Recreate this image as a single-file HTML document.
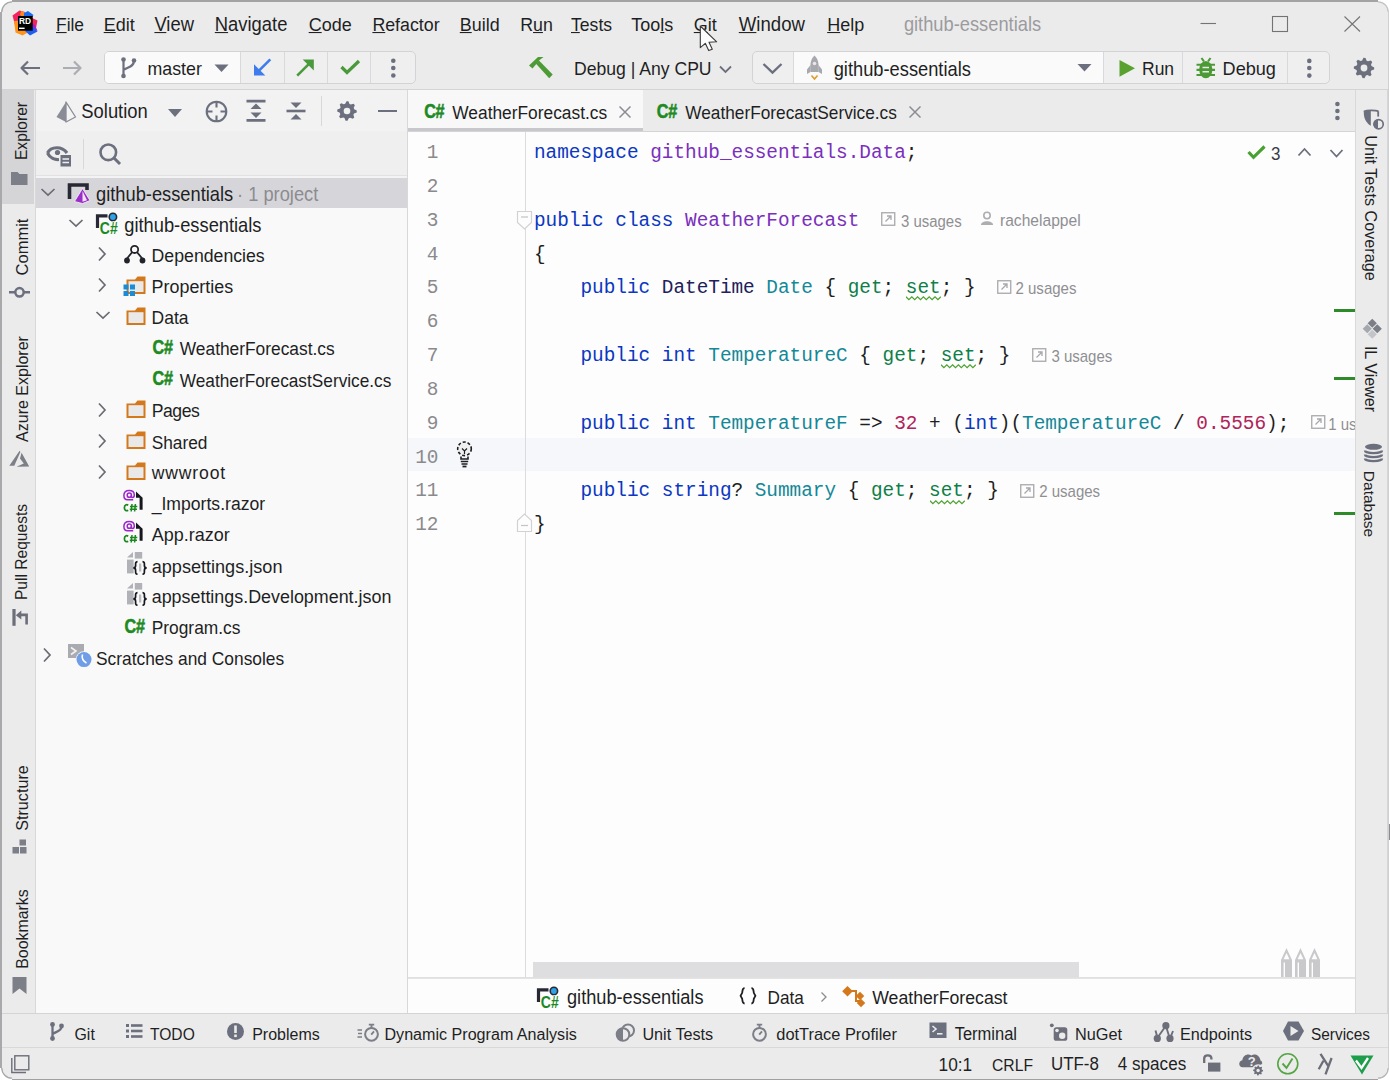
<!DOCTYPE html>
<html><head><meta charset="utf-8">
<style>
*{box-sizing:border-box;margin:0;padding:0}
html,body{width:1390px;height:1080px;overflow:hidden;background:#fff}
body{font-family:"Liberation Sans",sans-serif;position:relative}
.a{position:absolute;display:block}
.t{position:absolute;white-space:pre;z-index:2}
u{text-decoration:underline;text-underline-offset:1px;text-decoration-thickness:1px}
</style></head><body>
<div class="a" style="left:0px;top:0px;width:1390px;height:90px;background:#ebebeb;"></div>
<div class="a" style="left:0px;top:89px;width:1390px;height:1px;background:#d4d4d4;"></div>
<div class="a" style="left:0px;top:90px;width:36px;height:923px;background:#ebebeb;"></div>
<div class="a" style="left:35px;top:90px;width:1px;height:923px;background:#d9d9d9;"></div>
<div class="a" style="left:2px;top:90px;width:32px;height:114px;background:#d5d5d8;"></div>
<div class="a" style="left:36px;top:90px;width:372px;height:923px;background:#f9f9f9;"></div>
<div class="a" style="left:36px;top:90px;width:372px;height:41px;background:#f2f2f2;"></div>
<div class="a" style="left:36px;top:131px;width:372px;height:46px;background:#efefef;"></div>
<div class="a" style="left:36px;top:175px;width:372px;height:1px;background:#e2e2e2;"></div>
<div class="a" style="left:36px;top:176px;width:372px;height:2px;background:#f3f3f3;"></div>
<div class="a" style="left:36px;top:178px;width:372px;height:30px;background:#d6d6da;"></div>
<div class="a" style="left:407px;top:90px;width:1px;height:923px;background:#d8d8d8;"></div>
<div class="a" style="left:408px;top:90px;width:947px;height:41px;background:#ebebeb;"></div>
<div class="a" style="left:408px;top:131px;width:947px;height:1px;background:#d4d4d4;"></div>
<div class="a" style="left:408px;top:90px;width:235px;height:38px;background:#f8f8f8;"></div>
<div class="a" style="left:408px;top:128px;width:235px;height:3px;background:#c8c8cc;"></div>
<div class="a" style="left:408px;top:132px;width:947px;height:846px;background:#fdfdfd;"></div>
<div class="a" style="left:408px;top:438px;width:947px;height:33px;background:#f5f7fa;"></div>
<div class="a" style="left:524.5px;top:132px;width:1px;height:846px;background:#dcdcdc;"></div>
<div class="a" style="left:533px;top:962px;width:546px;height:16px;background:#dedee0;"></div>
<div class="a" style="left:408px;top:978px;width:947px;height:1px;background:#e4e4e4;"></div>
<div class="a" style="left:408px;top:979px;width:947px;height:34px;background:#fdfdfd;"></div>
<div class="a" style="left:1355px;top:90px;width:35px;height:923px;background:#ebebeb;"></div>
<div class="a" style="left:1355px;top:90px;width:1px;height:923px;background:#d9d9d9;"></div>
<div class="a" style="left:0px;top:1013px;width:1390px;height:1px;background:#d4d4d4;"></div>
<div class="a" style="left:0px;top:1014px;width:1390px;height:33px;background:#ebebeb;"></div>
<div class="a" style="left:0px;top:1047px;width:1390px;height:1px;background:#d9d9d9;"></div>
<div class="a" style="left:0px;top:1048px;width:1390px;height:32px;background:#ebebeb;"></div>
<div class="t" style="left:56px;top:13.87px;font-size:17.4px;line-height:23px;color:#1e1f24;font-family:'Liberation Sans',sans-serif;transform:scaleY(1.06);transform-origin:0 17.53px;"><u>F</u>ile</div>
<div class="t" style="left:103.7px;top:13.66px;font-size:18px;line-height:23px;color:#1e1f24;font-family:'Liberation Sans',sans-serif;transform:scaleY(1.06);transform-origin:0 17.74px;"><u>E</u>dit</div>
<div class="t" style="left:154.4px;top:13.02px;font-size:18.4px;line-height:24px;color:#1e1f24;font-family:'Liberation Sans',sans-serif;transform:scaleY(1.06);transform-origin:0 18.38px;"><u>V</u>iew</div>
<div class="t" style="left:214.8px;top:13.02px;font-size:18.4px;line-height:24px;color:#1e1f24;font-family:'Liberation Sans',sans-serif;transform:scaleY(1.06);transform-origin:0 18.38px;"><u>N</u>avigate</div>
<div class="t" style="left:308.7px;top:13.66px;font-size:18px;line-height:23px;color:#1e1f24;font-family:'Liberation Sans',sans-serif;transform:scaleY(1.06);transform-origin:0 17.74px;"><u>C</u>ode</div>
<div class="t" style="left:372.4px;top:13.73px;font-size:17.8px;line-height:23px;color:#1e1f24;font-family:'Liberation Sans',sans-serif;transform:scaleY(1.06);transform-origin:0 17.67px;"><u>R</u>efactor</div>
<div class="t" style="left:459.8px;top:13.70px;font-size:17.9px;line-height:23px;color:#1e1f24;font-family:'Liberation Sans',sans-serif;transform:scaleY(1.06);transform-origin:0 17.70px;"><u>B</u>uild</div>
<div class="t" style="left:520.2px;top:13.73px;font-size:17.8px;line-height:23px;color:#1e1f24;font-family:'Liberation Sans',sans-serif;transform:scaleY(1.06);transform-origin:0 17.67px;">R<u>u</u>n</div>
<div class="t" style="left:571px;top:13.80px;font-size:17.6px;line-height:23px;color:#1e1f24;font-family:'Liberation Sans',sans-serif;transform:scaleY(1.06);transform-origin:0 17.60px;"><u>T</u>ests</div>
<div class="t" style="left:631.3px;top:13.66px;font-size:18px;line-height:23px;color:#1e1f24;font-family:'Liberation Sans',sans-serif;transform:scaleY(1.06);transform-origin:0 17.74px;">Too<u>l</u>s</div>
<div class="t" style="left:693.8px;top:13.66px;font-size:18px;line-height:23px;color:#1e1f24;font-family:'Liberation Sans',sans-serif;transform:scaleY(1.06);transform-origin:0 17.74px;"><u>G</u>it</div>
<div class="t" style="left:738.8px;top:12.96px;font-size:18.6px;line-height:24px;color:#1e1f24;font-family:'Liberation Sans',sans-serif;transform:scaleY(1.06);transform-origin:0 18.44px;"><u>W</u>indow</div>
<div class="t" style="left:827.2px;top:13.66px;font-size:18px;line-height:23px;color:#1e1f24;font-family:'Liberation Sans',sans-serif;transform:scaleY(1.06);transform-origin:0 17.74px;"><u>H</u>elp</div>
<div class="t" style="left:903.9px;top:13.06px;font-size:18.3px;line-height:24px;color:#9b9b9f;font-family:'Liberation Sans',sans-serif;transform:scaleY(1.06);transform-origin:0 18.34px;">github-essentials</div>
<div class="t" style="left:147.5px;top:57.73px;font-size:17.8px;line-height:23px;color:#1e1f24;font-family:'Liberation Sans',sans-serif;transform:scaleY(1.06);transform-origin:0 17.67px;">master</div>
<div class="t" style="left:574px;top:58.30px;font-size:17.6px;line-height:23px;color:#1e1f24;font-family:'Liberation Sans',sans-serif;transform:scaleY(1.06);transform-origin:0 17.60px;">Debug | Any CPU</div>
<div class="t" style="left:833.7px;top:57.56px;font-size:18.3px;line-height:24px;color:#1e1f24;font-family:'Liberation Sans',sans-serif;transform:scaleY(1.06);transform-origin:0 18.34px;">github-essentials</div>
<div class="t" style="left:1142px;top:57.84px;font-size:17.5px;line-height:23px;color:#1e1f24;font-family:'Liberation Sans',sans-serif;transform:scaleY(1.06);transform-origin:0 17.56px;">Run</div>
<div class="t" style="left:1222.6px;top:57.13px;font-size:18.1px;line-height:24px;color:#1e1f24;font-family:'Liberation Sans',sans-serif;transform:scaleY(1.06);transform-origin:0 18.27px;">Debug</div>
<div class="t" style="left:81.3px;top:100.12px;font-size:18.4px;line-height:24px;color:#1e1f24;font-family:'Liberation Sans',sans-serif;transform:scaleY(1.06);transform-origin:0 18.38px;">Solution</div>
<div class="t" style="left:96px;top:182.56px;font-size:18.3px;line-height:24px;color:#1e1f24;font-family:'Liberation Sans',sans-serif;transform:scaleY(1.06);transform-origin:0 18.34px;">github-essentials</div>
<div class="t" style="left:124.3px;top:213.56px;font-size:18.3px;line-height:24px;color:#1e1f24;font-family:'Liberation Sans',sans-serif;transform:scaleY(1.06);transform-origin:0 18.34px;">github-essentials</div>
<div class="t" style="left:151.6px;top:245.27px;font-size:17.7px;line-height:23px;color:#1e1f24;font-family:'Liberation Sans',sans-serif;transform:scaleY(1.06);transform-origin:0 17.63px;">Dependencies</div>
<div class="t" style="left:151.6px;top:276.20px;font-size:17.9px;line-height:23px;color:#1e1f24;font-family:'Liberation Sans',sans-serif;transform:scaleY(1.06);transform-origin:0 17.70px;">Properties</div>
<div class="t" style="left:151.6px;top:307.34px;font-size:17.5px;line-height:23px;color:#1e1f24;font-family:'Liberation Sans',sans-serif;transform:scaleY(1.06);transform-origin:0 17.56px;">Data</div>
<div class="t" style="left:179.8px;top:338.39px;font-size:17.35px;line-height:23px;color:#1e1f24;font-family:'Liberation Sans',sans-serif;transform:scaleY(1.06);transform-origin:0 17.51px;">WeatherForecast.cs</div>
<div class="t" style="left:179.8px;top:369.92px;font-size:17.25px;line-height:22px;color:#1e1f24;font-family:'Liberation Sans',sans-serif;transform:scaleY(1.06);transform-origin:0 16.98px;">WeatherForecastService.cs</div>
<div class="t" style="left:151.7px;top:400.30px;font-size:17.6px;line-height:23px;color:#1e1f24;font-family:'Liberation Sans',sans-serif;transform:scaleY(1.06);transform-origin:0 17.60px;letter-spacing:-0.45px;">Pages</div>
<div class="t" style="left:151.7px;top:431.91px;font-size:17.3px;line-height:22px;color:#1e1f24;font-family:'Liberation Sans',sans-serif;transform:scaleY(1.06);transform-origin:0 16.99px;">Shared</div>
<div class="t" style="left:151.7px;top:462.30px;font-size:17.6px;line-height:23px;color:#1e1f24;font-family:'Liberation Sans',sans-serif;transform:scaleY(1.06);transform-origin:0 17.60px;letter-spacing:0.85px;">wwwroot</div>
<div class="t" style="left:151.7px;top:493.30px;font-size:17.6px;line-height:23px;color:#1e1f24;font-family:'Liberation Sans',sans-serif;transform:scaleY(1.06);transform-origin:0 17.60px;">_Imports.razor</div>
<div class="t" style="left:151.7px;top:524.16px;font-size:18px;line-height:23px;color:#1e1f24;font-family:'Liberation Sans',sans-serif;transform:scaleY(1.06);transform-origin:0 17.74px;">App.razor</div>
<div class="t" style="left:151.7px;top:554.63px;font-size:18.1px;line-height:24px;color:#1e1f24;font-family:'Liberation Sans',sans-serif;transform:scaleY(1.06);transform-origin:0 18.27px;">appsettings.json</div>
<div class="t" style="left:151.7px;top:586.20px;font-size:17.9px;line-height:23px;color:#1e1f24;font-family:'Liberation Sans',sans-serif;transform:scaleY(1.06);transform-origin:0 17.70px;">appsettings.Development.json</div>
<div class="t" style="left:151.7px;top:617.38px;font-size:17.37px;line-height:23px;color:#1e1f24;font-family:'Liberation Sans',sans-serif;transform:scaleY(1.06);transform-origin:0 17.52px;">Program.cs</div>
<div class="t" style="left:96px;top:648.38px;font-size:17.36px;line-height:23px;color:#1e1f24;font-family:'Liberation Sans',sans-serif;transform:scaleY(1.06);transform-origin:0 17.52px;">Scratches and Consoles</div>
<div class="t" style="left:237px;top:182.56px;font-size:18.3px;line-height:24px;color:#8c8c90;font-family:'Liberation Sans',sans-serif;transform:scaleY(1.06);transform-origin:0 18.34px;">· 1 project</div>
<div class="t" style="left:452.3px;top:101.79px;font-size:17.35px;line-height:23px;color:#1e1f24;font-family:'Liberation Sans',sans-serif;transform:scaleY(1.06);transform-origin:0 17.51px;">WeatherForecast.cs</div>
<div class="t" style="left:685.3px;top:102.32px;font-size:17.25px;line-height:22px;color:#1e1f24;font-family:'Liberation Sans',sans-serif;transform:scaleY(1.06);transform-origin:0 16.98px;">WeatherForecastService.cs</div>
<div class="t" style="left:426.87px;top:141.14px;font-size:19.38px;line-height:25px;color:#8a8a8e;font-family:'Liberation Mono',monospace;transform:scaleY(1.06);transform-origin:0 17.66px;">1</div>
<div class="t" style="left:426.87px;top:174.97px;font-size:19.38px;line-height:25px;color:#8a8a8e;font-family:'Liberation Mono',monospace;transform:scaleY(1.06);transform-origin:0 17.66px;">2</div>
<div class="t" style="left:426.87px;top:208.80px;font-size:19.38px;line-height:25px;color:#8a8a8e;font-family:'Liberation Mono',monospace;transform:scaleY(1.06);transform-origin:0 17.66px;">3</div>
<div class="t" style="left:426.87px;top:242.63px;font-size:19.38px;line-height:25px;color:#8a8a8e;font-family:'Liberation Mono',monospace;transform:scaleY(1.06);transform-origin:0 17.66px;">4</div>
<div class="t" style="left:426.87px;top:276.46px;font-size:19.38px;line-height:25px;color:#8a8a8e;font-family:'Liberation Mono',monospace;transform:scaleY(1.06);transform-origin:0 17.66px;">5</div>
<div class="t" style="left:426.87px;top:310.29px;font-size:19.38px;line-height:25px;color:#8a8a8e;font-family:'Liberation Mono',monospace;transform:scaleY(1.06);transform-origin:0 17.66px;">6</div>
<div class="t" style="left:426.87px;top:344.12px;font-size:19.38px;line-height:25px;color:#8a8a8e;font-family:'Liberation Mono',monospace;transform:scaleY(1.06);transform-origin:0 17.66px;">7</div>
<div class="t" style="left:426.87px;top:377.95px;font-size:19.38px;line-height:25px;color:#8a8a8e;font-family:'Liberation Mono',monospace;transform:scaleY(1.06);transform-origin:0 17.66px;">8</div>
<div class="t" style="left:426.87px;top:411.78px;font-size:19.38px;line-height:25px;color:#8a8a8e;font-family:'Liberation Mono',monospace;transform:scaleY(1.06);transform-origin:0 17.66px;">9</div>
<div class="t" style="left:415.24px;top:445.61px;font-size:19.38px;line-height:25px;color:#8a8a8e;font-family:'Liberation Mono',monospace;transform:scaleY(1.06);transform-origin:0 17.66px;">10</div>
<div class="t" style="left:415.24px;top:479.44px;font-size:19.38px;line-height:25px;color:#8a8a8e;font-family:'Liberation Mono',monospace;transform:scaleY(1.06);transform-origin:0 17.66px;">11</div>
<div class="t" style="left:415.24px;top:513.27px;font-size:19.38px;line-height:25px;color:#8a8a8e;font-family:'Liberation Mono',monospace;transform:scaleY(1.06);transform-origin:0 17.66px;">12</div>
<div class="t" style="left:534px;top:141.14px;font-size:19.38px;line-height:25px;color:#1e1f24;font-family:'Liberation Mono',monospace;transform:scaleY(1.06);transform-origin:0 17.66px;letter-spacing:0px"><span style="color:#0b37c2">namespace </span><span style="color:#7a2fbd">github_essentials.Data</span><span style="color:#1e1f24">;</span></div>
<div class="t" style="left:534px;top:208.80px;font-size:19.38px;line-height:25px;color:#1e1f24;font-family:'Liberation Mono',monospace;transform:scaleY(1.06);transform-origin:0 17.66px;letter-spacing:0px"><span style="color:#0b37c2">public class </span><span style="color:#7a2fbd">WeatherForecast</span></div>
<div class="t" style="left:534px;top:242.63px;font-size:19.38px;line-height:25px;color:#1e1f24;font-family:'Liberation Mono',monospace;transform:scaleY(1.06);transform-origin:0 17.66px;letter-spacing:0px"><span style="color:#1e1f24">{</span></div>
<div class="t" style="left:534px;top:276.46px;font-size:19.38px;line-height:25px;color:#1e1f24;font-family:'Liberation Mono',monospace;transform:scaleY(1.06);transform-origin:0 17.66px;letter-spacing:0px"><span style="color:#0b37c2">    public </span><span style="color:#21205c">DateTime </span><span style="color:#138898">Date</span><span style="color:#1e1f24"> { </span><span style="color:#0e7f48">get</span><span style="color:#1e1f24">; </span><span style="color:#0e7f48">set</span><span style="color:#1e1f24">; }</span></div>
<div class="t" style="left:534px;top:344.12px;font-size:19.38px;line-height:25px;color:#1e1f24;font-family:'Liberation Mono',monospace;transform:scaleY(1.06);transform-origin:0 17.66px;letter-spacing:0px"><span style="color:#0b37c2">    public int </span><span style="color:#138898">TemperatureC</span><span style="color:#1e1f24"> { </span><span style="color:#0e7f48">get</span><span style="color:#1e1f24">; </span><span style="color:#0e7f48">set</span><span style="color:#1e1f24">; }</span></div>
<div class="t" style="left:534px;top:411.78px;font-size:19.38px;line-height:25px;color:#1e1f24;font-family:'Liberation Mono',monospace;transform:scaleY(1.06);transform-origin:0 17.66px;letter-spacing:0px"><span style="color:#0b37c2">    public int </span><span style="color:#138898">TemperatureF</span><span style="color:#1e1f24"> => </span><span style="color:#b0245a">32</span><span style="color:#1e1f24"> + (</span><span style="color:#0b37c2">int</span><span style="color:#1e1f24">)(</span><span style="color:#138898">TemperatureC</span><span style="color:#1e1f24"> / </span><span style="color:#b0245a">0.5556</span><span style="color:#1e1f24">);</span></div>
<div class="t" style="left:534px;top:479.44px;font-size:19.38px;line-height:25px;color:#1e1f24;font-family:'Liberation Mono',monospace;transform:scaleY(1.06);transform-origin:0 17.66px;letter-spacing:0px"><span style="color:#0b37c2">    public string</span><span style="color:#1e1f24">? </span><span style="color:#138898">Summary</span><span style="color:#1e1f24"> { </span><span style="color:#0e7f48">get</span><span style="color:#1e1f24">; </span><span style="color:#0e7f48">set</span><span style="color:#1e1f24">; }</span></div>
<div class="t" style="left:534px;top:513.27px;font-size:19.38px;line-height:25px;color:#1e1f24;font-family:'Liberation Mono',monospace;transform:scaleY(1.06);transform-origin:0 17.66px;letter-spacing:0px"><span style="color:#1e1f24">}</span></div>
<svg class="a" style="left:881px;top:212px;" width="15" height="14" viewBox="0 0 15 14"><rect x="0.75" y="0.75" width="13" height="12.5" fill="none" stroke="#a8a8ac" stroke-width="1.3"/><path d="M4.5 9.5 L10 4 M6 4 H10 V8" fill="none" stroke="#a8a8ac" stroke-width="1.3"/></svg>
<div class="t" style="left:901px;top:211.82px;font-size:14.95px;line-height:19px;color:#8f8f93;font-family:'Liberation Sans',sans-serif;transform:scaleY(1.06);transform-origin:0 14.68px;">3 usages</div>
<div class="t" style="left:1000px;top:211.09px;font-size:15.6px;line-height:20px;color:#8f8f93;font-family:'Liberation Sans',sans-serif;transform:scaleY(1.06);transform-origin:0 15.41px;">rachelappel</div>
<div class="t" style="left:567px;top:985.99px;font-size:18.2px;line-height:24px;color:#1e1f24;font-family:'Liberation Sans',sans-serif;transform:scaleY(1.06);transform-origin:0 18.31px;">github-essentials</div>
<div class="t" style="left:767.5px;top:987.34px;font-size:17.2px;line-height:22px;color:#1e1f24;font-family:'Liberation Sans',sans-serif;transform:scaleY(1.06);transform-origin:0 16.96px;">Data</div>
<div class="t" style="left:872.2px;top:986.67px;font-size:17.7px;line-height:23px;color:#1e1f24;font-family:'Liberation Sans',sans-serif;transform:scaleY(1.06);transform-origin:0 17.63px;">WeatherForecast</div>
<div class="t" style="left:74.5px;top:1024.09px;font-size:15.9px;line-height:21px;color:#1e1f24;font-family:'Liberation Sans',sans-serif;transform:scaleY(1.06);transform-origin:0 16.01px;">Git</div>
<div class="t" style="left:150px;top:1024.69px;font-size:15.6px;line-height:20px;color:#1e1f24;font-family:'Liberation Sans',sans-serif;transform:scaleY(1.06);transform-origin:0 15.41px;">TODO</div>
<div class="t" style="left:252.2px;top:1024.06px;font-size:16px;line-height:21px;color:#1e1f24;font-family:'Liberation Sans',sans-serif;transform:scaleY(1.06);transform-origin:0 16.04px;">Problems</div>
<div class="t" style="left:384.5px;top:1024.02px;font-size:16.1px;line-height:21px;color:#1e1f24;font-family:'Liberation Sans',sans-serif;transform:scaleY(1.06);transform-origin:0 16.08px;">Dynamic Program Analysis</div>
<div class="t" style="left:642.4px;top:1023.99px;font-size:16.2px;line-height:21px;color:#1e1f24;font-family:'Liberation Sans',sans-serif;transform:scaleY(1.06);transform-origin:0 16.11px;">Unit Tests</div>
<div class="t" style="left:776.3px;top:1023.92px;font-size:16.4px;line-height:21px;color:#1e1f24;font-family:'Liberation Sans',sans-serif;transform:scaleY(1.06);transform-origin:0 16.18px;">dotTrace Profiler</div>
<div class="t" style="left:954.7px;top:1023.88px;font-size:16.5px;line-height:21px;color:#1e1f24;font-family:'Liberation Sans',sans-serif;transform:scaleY(1.06);transform-origin:0 16.22px;">Terminal</div>
<div class="t" style="left:1075px;top:1023.95px;font-size:16.3px;line-height:21px;color:#1e1f24;font-family:'Liberation Sans',sans-serif;transform:scaleY(1.06);transform-origin:0 16.15px;">NuGet</div>
<div class="t" style="left:1180px;top:1023.99px;font-size:16.2px;line-height:21px;color:#1e1f24;font-family:'Liberation Sans',sans-serif;transform:scaleY(1.06);transform-origin:0 16.11px;">Endpoints</div>
<div class="t" style="left:1311px;top:1024.76px;font-size:15.4px;line-height:20px;color:#1e1f24;font-family:'Liberation Sans',sans-serif;transform:scaleY(1.06);transform-origin:0 15.34px;">Services</div>
<div class="t" style="left:938.6px;top:1054.31px;font-size:17.3px;line-height:22px;color:#1e1f24;font-family:'Liberation Sans',sans-serif;transform:scaleY(1.06);transform-origin:0 16.99px;">10:1</div>
<div class="t" style="left:992px;top:1055.86px;font-size:15.7px;line-height:20px;color:#1e1f24;font-family:'Liberation Sans',sans-serif;transform:scaleY(1.06);transform-origin:0 15.44px;">CRLF</div>
<div class="t" style="left:1051px;top:1054.44px;font-size:16.9px;line-height:22px;color:#1e1f24;font-family:'Liberation Sans',sans-serif;transform:scaleY(1.06);transform-origin:0 16.86px;">UTF-8</div>
<div class="t" style="left:1117.8px;top:1054.37px;font-size:17.1px;line-height:22px;color:#1e1f24;font-family:'Liberation Sans',sans-serif;transform:scaleY(1.06);transform-origin:0 16.93px;">4 spaces</div>
<svg class="a" style="left:8px;top:6px;" width="36" height="36" viewBox="0 0 36 36">
<polygon points="4.5,9.5 11.5,4.5 17,6 16,17 7,19" fill="#f0245f"/>
<polygon points="13,5 17,6.5 16,12 12,9" fill="#ff8a1f"/>
<polygon points="6,15 16,14 19,27 14.5,29.5 7.5,26.5" fill="#ff9419"/>
<polygon points="16,7 20,5 25.5,9 22,15 16,14" fill="#1c6cf0"/>
<polygon points="22,11 29.5,14.5 28,22 23,19" fill="#f0245f"/>
<polygon points="23,17 27,19 29.5,25 26,24" fill="#a21fd0"/>
<polygon points="17,25 24,20 29.5,25.5 22,29.5" fill="#1d5ef5"/>
<rect x="10" y="10" width="14.7" height="14.7" fill="#000"/>
<text x="11" y="17.6" font-family="Liberation Sans" font-weight="bold" font-size="8.4" fill="#fff">RD</text>
<rect x="11" y="21.6" width="5.6" height="1.4" fill="#fff"/>
</svg>
<svg class="a" style="left:1195px;top:10px;" width="175" height="28" viewBox="0 0 175 28">
<line x1="5.5" y1="13.5" x2="21" y2="13.5" stroke="#747474" stroke-width="1.1"/>
<rect x="77.5" y="6.5" width="15" height="15" fill="none" stroke="#747474" stroke-width="1.1"/>
<path d="M149.5 6.5 L165 21.5 M165 6.5 L149.5 21.5" stroke="#747474" stroke-width="1.1"/>
</svg>
<svg class="a" style="left:18px;top:58px;" width="70" height="20" viewBox="0 0 70 20">
<path d="M4 10 H22 M10 3.5 L3.5 10 L10 16.5" fill="none" stroke="#6c707e" stroke-width="2.2" stroke-linejoin="round"/>
<path d="M45 10 H62 M56 3.5 L62.5 10 L56 16.5" fill="none" stroke="#acadb3" stroke-width="2.2" stroke-linejoin="round"/>
</svg>
<div class="a" style="left:104px;top:51px;width:312px;height:33px;border:1px solid #d3d3d5;border-radius:5px;background:#efefef;overflow:hidden"><div class="a" style="left:0;top:0;width:135px;height:32px;background:#fafafa"></div><div class="a" style="left:135px;top:0;width:1px;height:32px;background:#d9d9db"></div><div class="a" style="left:179px;top:0;width:1px;height:32px;background:#d9d9db"></div><div class="a" style="left:222px;top:0;width:1px;height:32px;background:#d9d9db"></div><div class="a" style="left:265px;top:0;width:1px;height:32px;background:#d9d9db"></div></div>
<svg class="a" style="left:114px;top:54px;" width="130" height="28" viewBox="0 0 130 28">
<circle cx="9.5" cy="22" r="2.3" fill="#6c707e"/><circle cx="9.5" cy="5.5" r="2.3" fill="#6c707e"/><circle cx="20" cy="6.5" r="2.3" fill="#6c707e"/>
<path d="M9.5 6 V22 M20 7 C20 13 13 13 9.5 16" fill="none" stroke="#6c707e" stroke-width="2.2"/>
<polygon points="100.5,10.5 114.5,10.5 107.5,18" fill="#6c707e"/>
</svg>
<svg class="a" style="left:250px;top:56px;" width="170" height="24" viewBox="0 0 170 24">
<path d="M20.3 3.3 L9 14.6" fill="none" stroke="#3e7ced" stroke-width="2.6"/>
<polygon points="4,8.3 4,19.6 15.3,19.6" fill="#3e7ced"/>
<path d="M47.2 19.6 L58.5 8.3" fill="none" stroke="#4a9a3c" stroke-width="2.6"/>
<polygon points="52.7,3.5 63.8,3.5 63.8,14.6" fill="#4a9a3c"/>
<path d="M91.5 11 L97 16.5 L109 5" fill="none" stroke="#4a9a3c" stroke-width="3.2"/>
<circle cx="143.3" cy="4.8" r="2.3" fill="#6c707e"/><circle cx="143.3" cy="12" r="2.3" fill="#6c707e"/><circle cx="143.3" cy="19.5" r="2.3" fill="#6c707e"/>
</svg>
<svg class="a" style="left:524px;top:50px;" width="36" height="36" viewBox="0 0 36 36">
<polygon points="5,15.5 14,7 19.5,7 15.3,10.3 12.3,14 8.5,18.6" fill="#4c9b35"/>
<polygon points="11.8,13.6 15,10.6 28.7,24.6 25.2,28.2" fill="#4c9b35"/>
</svg>
<svg class="a" style="left:717px;top:62px;" width="18" height="14" viewBox="0 0 18 14"><path d="M3 4.5 L8.5 10 L14 4.5" fill="none" stroke="#6c707e" stroke-width="1.8"/></svg>
<div class="a" style="left:752px;top:51px;width:578px;height:33px;border:1px solid #d3d3d5;border-radius:5px;background:#efefef;overflow:hidden"><div class="a" style="left:41px;top:0;width:310px;height:32px;background:#fafafa"></div><div class="a" style="left:40px;top:0;width:1px;height:32px;background:#d9d9db"></div><div class="a" style="left:350px;top:0;width:1px;height:32px;background:#d9d9db"></div><div class="a" style="left:429px;top:0;width:1px;height:32px;background:#d9d9db"></div><div class="a" style="left:534px;top:0;width:1px;height:32px;background:#d9d9db"></div></div>
<svg class="a" style="left:760px;top:60px;" width="26" height="16" viewBox="0 0 26 16"><path d="M3.5 4 L12.5 12.5 L21.5 4" fill="none" stroke="#6c707e" stroke-width="2.4"/></svg>
<svg class="a" style="left:804px;top:54px;" width="22" height="28" viewBox="0 0 22 28">
<path d="M10.5 1.5 C14.5 5 15 10 14.5 18 H6.5 C6 10 6.5 5 10.5 1.5 Z" fill="#a8a9ae"/>
<path d="M6.5 11 L3 15.5 V20 L6.5 18 Z M14.5 11 L18 15.5 V20 L14.5 18 Z" fill="#a8a9ae"/>
<circle cx="10.5" cy="9.5" r="1.8" fill="#e8e8ea"/>
<path d="M7.5 21.5 L10.5 25 L13.5 21.5" fill="none" stroke="#e39a2a" stroke-width="1.6"/>
</svg>
<svg class="a" style="left:1074px;top:60px;" width="22" height="14" viewBox="0 0 22 14"><polygon points="3.5,4 17.5,4 10.5,11.5" fill="#6c707e"/></svg>
<svg class="a" style="left:1115px;top:56px;" width="24" height="24" viewBox="0 0 24 24"><polygon points="4.5,4 20,12.3 4.5,20.8" fill="#59a22f"/></svg>
<svg class="a" style="left:1193px;top:55px;" width="26" height="26" viewBox="0 0 26 26">
<path d="M3.5 9.7 H22 M3.5 14.9 H22 M3.5 20 H22 M8.5 3 L11 6.5 M17.5 3 L15 6.5" stroke="#4c9a36" stroke-width="2.1"/>
<ellipse cx="12.8" cy="14.6" rx="6.6" ry="8.6" fill="#4c9a36"/>
<path d="M9.5 12.5 H16 M9.5 16.8 H16" stroke="#e9e9e9" stroke-width="1.6"/>
</svg>
<svg class="a" style="left:1304px;top:56px;" width="12" height="24" viewBox="0 0 12 24"><circle cx="5.3" cy="4.9" r="2.3" fill="#6c707e"/><circle cx="5.3" cy="12" r="2.3" fill="#6c707e"/><circle cx="5.3" cy="19.6" r="2.3" fill="#6c707e"/></svg>
<svg class="a" style="left:1350px;top:54px;" width="28" height="28" viewBox="0 0 28 28"><polygon points="24.19,13.50 24.09,15.50 21.30,16.61 20.65,17.99 21.56,20.85 20.08,22.19 17.31,21.01 15.88,21.52 14.50,24.19 12.50,24.09 11.39,21.30 10.01,20.65 7.15,21.56 5.81,20.08 6.99,17.31 6.48,15.88 3.81,14.50 3.91,12.50 6.70,11.39 7.35,10.01 6.44,7.15 7.92,5.81 10.69,6.99 12.12,6.48 13.50,3.81 15.50,3.91 16.61,6.70 17.99,7.35 20.85,6.44 22.19,7.92 21.01,10.69 21.52,12.12" fill="#6c707e"/><circle cx="14" cy="14" r="3.4" fill="#ebebeb"/></svg>
<svg class="a" style="left:54px;top:100px;" width="24" height="24" viewBox="0 0 24 24">
<polygon points="12,2 2.5,17 12,22" fill="#8b8d96"/>
<polygon points="12,2 21.5,17 12,22" fill="#f4f4f4" stroke="#8b8d96" stroke-width="1.3" stroke-linejoin="round"/>
</svg>
<svg class="a" style="left:165px;top:105px;" width="20" height="14" viewBox="0 0 20 14"><polygon points="3,4 17,4 10,12" fill="#6c707e"/></svg>
<svg class="a" style="left:204px;top:99px;" width="26" height="26" viewBox="0 0 26 26">
<circle cx="12.5" cy="12.5" r="9.8" fill="none" stroke="#6c707e" stroke-width="2.1"/>
<path d="M12.5 2.7 V8.5 M12.5 16.5 V22.3 M2.7 12.5 H8.5 M16.5 12.5 H22.3" stroke="#6c707e" stroke-width="2.1"/>
</svg>
<svg class="a" style="left:244px;top:98px;" width="26" height="26" viewBox="0 0 26 26">
<path d="M2.5 3.2 H21.5 M2.5 22.3 H21.5" stroke="#6c707e" stroke-width="2.8"/>
<polygon points="6.5,11 12,5.5 17.5,11" fill="#6c707e"/><polygon points="6.5,14.5 12,20 17.5,14.5" fill="#6c707e"/>
</svg>
<svg class="a" style="left:284px;top:98px;" width="26" height="26" viewBox="0 0 26 26">
<path d="M2.5 13 H21.5" stroke="#6c707e" stroke-width="2.6"/>
<polygon points="6.5,4.5 12,10 17.5,4.5" fill="#6c707e"/><polygon points="6.5,21.5 12,16 17.5,21.5" fill="#6c707e"/>
</svg>
<div class="a" style="left:321px;top:96px;width:1px;height:30px;background:#d8d8d8;"></div>
<svg class="a" style="left:333px;top:97px;" width="28" height="28" viewBox="0 0 28 28"><polygon points="23.79,13.52 23.69,15.44 21.01,16.51 20.39,17.83 21.26,20.58 19.84,21.87 17.18,20.73 15.81,21.22 14.48,23.79 12.56,23.69 11.49,21.01 10.17,20.39 7.42,21.26 6.13,19.84 7.27,17.18 6.78,15.81 4.21,14.48 4.31,12.56 6.99,11.49 7.61,10.17 6.74,7.42 8.16,6.13 10.82,7.27 12.19,6.78 13.52,4.21 15.44,4.31 16.51,6.99 17.83,7.61 20.58,6.74 21.87,8.16 20.73,10.82 21.22,12.19" fill="#6c707e"/><circle cx="14" cy="14" r="3.3" fill="#f2f2f2"/></svg>
<div class="a" style="left:378px;top:110px;width:19px;height:2.2px;background:#6c707e;"></div>
<svg class="a" style="left:44px;top:140px;" width="32" height="30" viewBox="0 0 32 30">
<path d="M3.5 13 C7 6 18 6 23 13" fill="none" stroke="#6c707e" stroke-width="3.2"/>
<path d="M3.5 13 C6 18 11 20 15 19.5" fill="none" stroke="#6c707e" stroke-width="3.2"/>
<circle cx="13.5" cy="12.5" r="2.6" fill="#6c707e"/>
<rect x="16" y="14.5" width="11.5" height="12.5" fill="#6c707e" stroke="#efefef" stroke-width="1"/>
<path d="M18.5 19 H25 M18.5 22.5 H25" stroke="#efefef" stroke-width="1.4"/>
</svg>
<div class="a" style="left:83px;top:139px;width:1px;height:30px;background:#d8d8d8;"></div>
<svg class="a" style="left:96px;top:140px;" width="28" height="28" viewBox="0 0 28 28">
<circle cx="12.3" cy="12.3" r="7.8" fill="none" stroke="#6c707e" stroke-width="2.6"/>
<path d="M18 18 L24 24" stroke="#6c707e" stroke-width="3"/>
</svg>
<svg class="a" style="left:38.5px;top:185.5px;" width="18" height="12" viewBox="0 0 18 12"><path d="M2.5 3 L9 9 L15.5 3" fill="none" stroke="#6a6b73" stroke-width="1.7"/></svg>
<svg class="a" style="left:66.5px;top:216.5px;" width="18" height="12" viewBox="0 0 18 12"><path d="M2.5 3 L9 9 L15.5 3" fill="none" stroke="#6a6b73" stroke-width="1.7"/></svg>
<svg class="a" style="left:96px;top:244.7px;" width="12" height="18" viewBox="0 0 12 18"><path d="M3 2.5 L9 9 L3 15.5" fill="none" stroke="#6a6b73" stroke-width="1.7"/></svg>
<svg class="a" style="left:96px;top:276px;" width="12" height="18" viewBox="0 0 12 18"><path d="M3 2.5 L9 9 L3 15.5" fill="none" stroke="#6a6b73" stroke-width="1.7"/></svg>
<svg class="a" style="left:93.7px;top:308.8px;" width="18" height="12" viewBox="0 0 18 12"><path d="M2.5 3 L9 9 L15.5 3" fill="none" stroke="#6a6b73" stroke-width="1.7"/></svg>
<svg class="a" style="left:96px;top:400.5px;" width="12" height="18" viewBox="0 0 12 18"><path d="M3 2.5 L9 9 L3 15.5" fill="none" stroke="#6a6b73" stroke-width="1.7"/></svg>
<svg class="a" style="left:96px;top:431.5px;" width="12" height="18" viewBox="0 0 12 18"><path d="M3 2.5 L9 9 L3 15.5" fill="none" stroke="#6a6b73" stroke-width="1.7"/></svg>
<svg class="a" style="left:96px;top:462.5px;" width="12" height="18" viewBox="0 0 12 18"><path d="M3 2.5 L9 9 L3 15.5" fill="none" stroke="#6a6b73" stroke-width="1.7"/></svg>
<svg class="a" style="left:40.5px;top:645.5px;" width="12" height="18" viewBox="0 0 12 18"><path d="M3 2.5 L9 9 L3 15.5" fill="none" stroke="#6a6b73" stroke-width="1.7"/></svg>
<svg class="a" style="left:66px;top:181px;" width="26" height="24" viewBox="0 0 26 24">
<path d="M3.5 18 V4 H21 V9" fill="none" stroke="#272833" stroke-width="3.6"/>
<polygon points="16.5,7.5 8.5,20.5 16.5,22.5 24,19.5" fill="#9b2dc9" stroke="#f4f4f4" stroke-width="0.8"/>
<polygon points="16.5,10 16.5,20.8 21,19.2" fill="#f0e6f5"/>
</svg>
<svg class="a" style="left:94px;top:211px;" width="26" height="24" viewBox="0 0 26 24">
<path d="M3.5 17 V4.8 H13.5" fill="none" stroke="#272833" stroke-width="3.2"/>
<circle cx="18.9" cy="6" r="3.7" fill="#2ea2e6" stroke="#272833" stroke-width="1.6"/>
<g transform="translate(5.8 22.7) scale(1 1.13)"><text x="0" y="0" font-family="Liberation Sans" font-weight="bold" font-size="14" fill="#1b8a24" stroke="#f9f9f9" stroke-width="1" paint-order="stroke">C#</text></g>
</svg>
<svg class="a" style="left:122px;top:242px;" width="26" height="22" viewBox="0 0 26 22">
<circle cx="12.6" cy="7.4" r="3.6" fill="none" stroke="#22232b" stroke-width="1.8"/>
<path d="M10.3 10 L5 16.5 M14.9 10 L20.2 16.5" stroke="#22232b" stroke-width="1.8"/>
<circle cx="5" cy="18.5" r="2.9" fill="#22232b"/><circle cx="20.5" cy="18.5" r="2.9" fill="#22232b"/>
</svg>
<svg class="a" style="left:124.5px;top:274.5px;" width="22" height="20" viewBox="0 0 22 20">
<path d="M1.5 4.5 H10 L12.5 1.5 H20.5 V19 H1.5 Z" fill="#d4781c"/>
<rect x="3.5" y="6.2" width="15" height="10.8" fill="#e9e9e9"/>
</svg>
<svg class="a" style="left:122px;top:283px;" width="16" height="15" viewBox="0 0 16 15"><rect x="1.5" y="1.5" width="5" height="5" fill="#1a8bd6"/><rect x="8" y="1.5" width="5" height="5" fill="#1a8bd6"/><rect x="1.5" y="8" width="5" height="5" fill="#1a8bd6"/><rect x="8" y="8" width="5" height="5" fill="#1a8bd6"/></svg>
<svg class="a" style="left:124.5px;top:305.5px;" width="22" height="20" viewBox="0 0 22 20">
<path d="M1.5 4.5 H10 L12.5 1.5 H20.5 V19 H1.5 Z" fill="#d4781c"/>
<rect x="3.5" y="6.2" width="15" height="10.8" fill="#e9e9e9"/>
</svg>
<svg class="a" style="left:124.5px;top:398.5px;" width="22" height="20" viewBox="0 0 22 20">
<path d="M1.5 4.5 H10 L12.5 1.5 H20.5 V19 H1.5 Z" fill="#d4781c"/>
<rect x="3.5" y="6.2" width="15" height="10.8" fill="#e9e9e9"/>
</svg>
<svg class="a" style="left:124.5px;top:429.5px;" width="22" height="20" viewBox="0 0 22 20">
<path d="M1.5 4.5 H10 L12.5 1.5 H20.5 V19 H1.5 Z" fill="#d4781c"/>
<rect x="3.5" y="6.2" width="15" height="10.8" fill="#e9e9e9"/>
</svg>
<svg class="a" style="left:124.5px;top:460.5px;" width="22" height="20" viewBox="0 0 22 20">
<path d="M1.5 4.5 H10 L12.5 1.5 H20.5 V19 H1.5 Z" fill="#d4781c"/>
<rect x="3.5" y="6.2" width="15" height="10.8" fill="#e9e9e9"/>
</svg>
<div class="t" style="left:152.5px;top:338.3px;font-size:16.2px;line-height:21.1px;font-weight:bold;color:#1d8a23;transform:scale(1,1.26);transform-origin:0 17.0px;letter-spacing:-0.3px;-webkit-text-stroke:0.45px #1d8a23">C#</div>
<div class="t" style="left:152.5px;top:369.3px;font-size:16.2px;line-height:21.1px;font-weight:bold;color:#1d8a23;transform:scale(1,1.26);transform-origin:0 17.0px;letter-spacing:-0.3px;-webkit-text-stroke:0.45px #1d8a23">C#</div>
<div class="t" style="left:124.5px;top:616.8px;font-size:16.2px;line-height:21.1px;font-weight:bold;color:#1d8a23;transform:scale(1,1.26);transform-origin:0 17.0px;letter-spacing:-0.3px;-webkit-text-stroke:0.45px #1d8a23">C#</div>
<svg class="a" style="left:120px;top:486px;" width="30" height="30" viewBox="0 0 30 30">
<path d="M13.2 13.8 H7.5 C5 13.8 3.9 12 3.9 9.6 C3.9 6.6 6 4.5 9.2 4.5 C12.4 4.5 14.3 6.4 14.3 9 C14.3 10.5 13.8 11.5 12.5 11.5 C11.3 11.5 11.4 10.4 11.4 9.3" fill="none" stroke="#9b27c8" stroke-width="1.5"/>
<circle cx="9.3" cy="9.2" r="2.1" fill="none" stroke="#9b27c8" stroke-width="1.5"/>
<path d="M16 5.5 L22.6 11.8 V23.7 H19.6 V11.8 H16 Z" fill="#16161e"/>
<path d="M8.2 19.2 C6.6 18.2 4.4 18.8 4.4 21.7 C4.4 24.6 6.6 25.2 8.2 24.2" fill="none" stroke="#1a871f" stroke-width="1.7"/>
<path d="M12 18 L11.2 25.5 M15.4 18 L14.6 25.5 M10 20.4 H17.3 M9.8 23.2 H17" stroke="#1a871f" stroke-width="1.5"/>
</svg>
<svg class="a" style="left:120px;top:517px;" width="30" height="30" viewBox="0 0 30 30">
<path d="M13.2 13.8 H7.5 C5 13.8 3.9 12 3.9 9.6 C3.9 6.6 6 4.5 9.2 4.5 C12.4 4.5 14.3 6.4 14.3 9 C14.3 10.5 13.8 11.5 12.5 11.5 C11.3 11.5 11.4 10.4 11.4 9.3" fill="none" stroke="#9b27c8" stroke-width="1.5"/>
<circle cx="9.3" cy="9.2" r="2.1" fill="none" stroke="#9b27c8" stroke-width="1.5"/>
<path d="M16 5.5 L22.6 11.8 V23.7 H19.6 V11.8 H16 Z" fill="#16161e"/>
<path d="M8.2 19.2 C6.6 18.2 4.4 18.8 4.4 21.7 C4.4 24.6 6.6 25.2 8.2 24.2" fill="none" stroke="#1a871f" stroke-width="1.7"/>
<path d="M12 18 L11.2 25.5 M15.4 18 L14.6 25.5 M10 20.4 H17.3 M9.8 23.2 H17" stroke="#1a871f" stroke-width="1.5"/>
</svg>
<svg class="a" style="left:122px;top:549px;" width="30" height="30" viewBox="0 0 30 30">
<polygon points="5,8.6 11,3 11,8.6" fill="#b1b2b7"/>
<rect x="12.8" y="3" width="7.4" height="6.6" fill="#b1b2b7"/>
<rect x="5" y="10.6" width="6.6" height="13.8" fill="#b1b2b7"/>
<rect x="17" y="14.5" width="2.3" height="8" fill="#b9babe"/>
<path d="M15.5 12.6 C13.3 12.6 13.6 14.5 13.6 16.5 C13.6 18.3 12.8 18.9 11.3 18.9 C12.8 18.9 13.6 19.5 13.6 21.3 C13.6 23.3 13.3 25.2 15.5 25.2" fill="none" stroke="#16161e" stroke-width="1.7"/>
<path d="M20.5 12.6 C22.7 12.6 22.4 14.5 22.4 16.5 C22.4 18.3 23.2 18.9 24.7 18.9 C23.2 18.9 22.4 19.5 22.4 21.3 C22.4 23.3 22.7 25.2 20.5 25.2" fill="none" stroke="#16161e" stroke-width="1.7"/>
</svg>
<svg class="a" style="left:122px;top:580px;" width="30" height="30" viewBox="0 0 30 30">
<polygon points="5,8.6 11,3 11,8.6" fill="#b1b2b7"/>
<rect x="12.8" y="3" width="7.4" height="6.6" fill="#b1b2b7"/>
<rect x="5" y="10.6" width="6.6" height="13.8" fill="#b1b2b7"/>
<rect x="17" y="14.5" width="2.3" height="8" fill="#b9babe"/>
<path d="M15.5 12.6 C13.3 12.6 13.6 14.5 13.6 16.5 C13.6 18.3 12.8 18.9 11.3 18.9 C12.8 18.9 13.6 19.5 13.6 21.3 C13.6 23.3 13.3 25.2 15.5 25.2" fill="none" stroke="#16161e" stroke-width="1.7"/>
<path d="M20.5 12.6 C22.7 12.6 22.4 14.5 22.4 16.5 C22.4 18.3 23.2 18.9 24.7 18.9 C23.2 18.9 22.4 19.5 22.4 21.3 C22.4 23.3 22.7 25.2 20.5 25.2" fill="none" stroke="#16161e" stroke-width="1.7"/>
</svg>
<svg class="a" style="left:66px;top:642px;" width="30" height="28" viewBox="0 0 30 28">
<rect x="2" y="2" width="16" height="14" fill="#a9abb1"/>
<path d="M5 5.5 L10 9 L5 12.5" fill="none" stroke="#f2f2f2" stroke-width="1.6"/>
<circle cx="18" cy="17.6" r="8.3" fill="#f9f9f9"/>
<circle cx="18" cy="17.6" r="7.5" fill="#6f9de6"/>
<path d="M16.5 12.5 C15.5 16 17 19 20.5 21" fill="none" stroke="#fff" stroke-width="1.6"/>
</svg>
<div class="t" style="left:424.2px;top:102.2px;font-size:16.2px;line-height:21.1px;font-weight:bold;color:#1d8a23;transform:scale(1,1.26);transform-origin:0 17.0px;letter-spacing:-0.3px;-webkit-text-stroke:0.45px #1d8a23">C#</div>
<div class="t" style="left:656.8px;top:102.2px;font-size:16.2px;line-height:21.1px;font-weight:bold;color:#1d8a23;transform:scale(1,1.26);transform-origin:0 17.0px;letter-spacing:-0.3px;-webkit-text-stroke:0.45px #1d8a23">C#</div>
<svg class="a" style="left:617.5px;top:104.5px;" width="14" height="14" viewBox="0 0 14 14"><path d="M1.5 1.5 L12.5 12.5 M12.5 1.5 L1.5 12.5" stroke="#8c8d93" stroke-width="1.5"/></svg>
<svg class="a" style="left:907.7px;top:104.5px;" width="14" height="14" viewBox="0 0 14 14"><path d="M1.5 1.5 L12.5 12.5 M12.5 1.5 L1.5 12.5" stroke="#8c8d93" stroke-width="1.5"/></svg>
<svg class="a" style="left:1332px;top:98px;" width="12" height="26" viewBox="0 0 12 26"><circle cx="5.4" cy="6" r="2.3" fill="#6c707e"/><circle cx="5.4" cy="13" r="2.3" fill="#6c707e"/><circle cx="5.4" cy="20" r="2.3" fill="#6c707e"/></svg>
<svg class="a" style="left:516px;top:210px;" width="17" height="21" viewBox="0 0 17 21"><path d="M1.5 1.5 H15.5 V12.5 L8.5 19 L1.5 12.5 Z" fill="#fdfdfd" stroke="#d2d2d4" stroke-width="1.2"/><path d="M5 7 H12" stroke="#c4c4c6" stroke-width="1.2"/></svg>
<svg class="a" style="left:516px;top:512px;" width="17" height="21" viewBox="0 0 17 21"><path d="M1.5 19.5 H15.5 V8.5 L8.5 2 L1.5 8.5 Z" fill="#fdfdfd" stroke="#d2d2d4" stroke-width="1.2"/><path d="M5 13.5 H12" stroke="#c4c4c6" stroke-width="1.2"/></svg>
<svg class="a" style="left:454px;top:440px;" width="22" height="30" viewBox="0 0 22 30">
<circle cx="10.5" cy="8.8" r="6.8" fill="#f0f0f0" stroke="#1e1f24" stroke-width="1.6" stroke-dasharray="3 2"/>
<path d="M8 8.5 L10.5 11 L13 8.5 M10.5 11 V14" fill="none" stroke="#1e1f24" stroke-width="1.2"/>
<path d="M7 16.5 V19 H14 V16.5" fill="none" stroke="#1e1f24" stroke-width="1.6"/>
<path d="M6.8 21.5 H14.2 M7.5 24 H13.5" stroke="#1e1f24" stroke-width="1.6"/>
<path d="M8.5 26.5 H12.5" stroke="#1e1f24" stroke-width="1.8"/>
</svg>
<svg class="a" style="left:1246px;top:144px;" width="22" height="17" viewBox="0 0 22 17"><path d="M2.5 8 L7.5 13.3 L18.5 2.5" fill="none" stroke="#49a132" stroke-width="3.2"/></svg>
<div class="t" style="left:1271px;top:144.01px;font-size:17px;line-height:22px;color:#3a3b44;font-family:'Liberation Sans',sans-serif;transform:scaleY(1.06);transform-origin:0 16.89px;">3</div>
<svg class="a" style="left:1296px;top:146px;" width="18" height="12" viewBox="0 0 18 12"><path d="M2.5 9.5 L8.5 3 L14.5 9.5" fill="none" stroke="#6c707e" stroke-width="1.8"/></svg>
<svg class="a" style="left:1328px;top:147px;" width="18" height="12" viewBox="0 0 18 12"><path d="M2.5 3 L8.5 9.5 L14.5 3" fill="none" stroke="#6c707e" stroke-width="1.8"/></svg>
<svg class="a" style="left:979.5px;top:211px;" width="15" height="15" viewBox="0 0 15 15"><circle cx="7" cy="4.5" r="3.2" fill="none" stroke="#aeaeb2" stroke-width="1.6"/><path d="M1 14 C1 9 13 9 13 14 Z" fill="#aeaeb2"/></svg>
<svg class="a" style="left:996.5px;top:280px;" width="15" height="14" viewBox="0 0 15 14"><rect x="0.75" y="0.75" width="13" height="12.5" fill="none" stroke="#a8a8ac" stroke-width="1.3"/><path d="M4.5 9.5 L10 4 M6 4 H10 V8" fill="none" stroke="#a8a8ac" stroke-width="1.3"/></svg>
<div class="t" style="left:1015.5px;top:279.09px;font-size:15.03px;line-height:20px;color:#8f8f93;font-family:'Liberation Sans',sans-serif;transform:scaleY(1.06);transform-origin:0 15.21px;">2 usages</div>
<svg class="a" style="left:1032.3px;top:348px;" width="15" height="14" viewBox="0 0 15 14"><rect x="0.75" y="0.75" width="13" height="12.5" fill="none" stroke="#a8a8ac" stroke-width="1.3"/><path d="M4.5 9.5 L10 4 M6 4 H10 V8" fill="none" stroke="#a8a8ac" stroke-width="1.3"/></svg>
<div class="t" style="left:1051.4px;top:346.79px;font-size:15.03px;line-height:20px;color:#8f8f93;font-family:'Liberation Sans',sans-serif;transform:scaleY(1.06);transform-origin:0 15.21px;">3 usages</div>
<svg class="a" style="left:1311.4px;top:415px;" width="15" height="14" viewBox="0 0 15 14"><rect x="0.75" y="0.75" width="13" height="12.5" fill="none" stroke="#a8a8ac" stroke-width="1.3"/><path d="M4.5 9.5 L10 4 M6 4 H10 V8" fill="none" stroke="#a8a8ac" stroke-width="1.3"/></svg>
<div class="a" style="left:1300px;top:405px;width:55px;height:35px;overflow:hidden;z-index:3"><div class="t" style="left:28.200000000000045px;top:9.50px;font-size:15px;line-height:20px;color:#8f8f93;font-family:'Liberation Sans',sans-serif;transform:scaleY(1.06);transform-origin:0 15.20px;">1 usages</div></div>
<svg class="a" style="left:1019.8px;top:484px;" width="15" height="14" viewBox="0 0 15 14"><rect x="0.75" y="0.75" width="13" height="12.5" fill="none" stroke="#a8a8ac" stroke-width="1.3"/><path d="M4.5 9.5 L10 4 M6 4 H10 V8" fill="none" stroke="#a8a8ac" stroke-width="1.3"/></svg>
<div class="t" style="left:1039.2px;top:482.09px;font-size:15.03px;line-height:20px;color:#8f8f93;font-family:'Liberation Sans',sans-serif;transform:scaleY(1.06);transform-origin:0 15.21px;">2 usages</div>
<svg class="a" style="left:906px;top:295.5px;" width="35" height="5" viewBox="0 0 35 5"><polyline points="0.0,0.8 2.9,3.6 5.8,0.8 8.7,3.6 11.6,0.8 14.5,3.6 17.4,0.8 20.3,3.6 23.2,0.8 26.1,3.6 29.0,0.8 31.9,3.6 34.8,0.8" fill="none" stroke="#4ba22e" stroke-width="1.2"/></svg>
<svg class="a" style="left:941px;top:363.5px;" width="35" height="5" viewBox="0 0 35 5"><polyline points="0.0,0.8 2.9,3.6 5.8,0.8 8.7,3.6 11.6,0.8 14.5,3.6 17.4,0.8 20.3,3.6 23.2,0.8 26.1,3.6 29.0,0.8 31.9,3.6 34.8,0.8" fill="none" stroke="#4ba22e" stroke-width="1.2"/></svg>
<svg class="a" style="left:929.5px;top:499.5px;" width="35" height="5" viewBox="0 0 35 5"><polyline points="0.0,0.8 2.9,3.6 5.8,0.8 8.7,3.6 11.6,0.8 14.5,3.6 17.4,0.8 20.3,3.6 23.2,0.8 26.1,3.6 29.0,0.8 31.9,3.6 34.8,0.8" fill="none" stroke="#4ba22e" stroke-width="1.2"/></svg>
<div class="a" style="left:1334px;top:309px;width:21px;height:3px;background:#2f8a2a;"></div>
<div class="a" style="left:1334px;top:377px;width:21px;height:3px;background:#2f8a2a;"></div>
<div class="a" style="left:1334px;top:512px;width:21px;height:3px;background:#2f8a2a;"></div>
<svg class="a" style="left:1279.5px;top:946px;" width="42" height="32" viewBox="0 0 42 32"><path transform="translate(0 0)" d="M1 31 V14 L6.5 2 L12 14 V31 H5 V16.5 H3.6 V31 Z" fill="#c9c9cc"/><path transform="translate(0 0)" d="M3.6 13.2 L6.5 7 L9.4 13.2 Z" fill="#fdfdfd"/><path transform="translate(14 0)" d="M1 31 V14 L6.5 2 L12 14 V31 H5 V16.5 H3.6 V31 Z" fill="#c9c9cc"/><path transform="translate(14 0)" d="M3.6 13.2 L6.5 7 L9.4 13.2 Z" fill="#fdfdfd"/><path transform="translate(28 0)" d="M1 31 V14 L6.5 2 L12 14 V31 H5 V16.5 H3.6 V31 Z" fill="#c9c9cc"/><path transform="translate(28 0)" d="M3.6 13.2 L6.5 7 L9.4 13.2 Z" fill="#fdfdfd"/></svg>
<div class="a" style="left:408px;top:977px;width:947px;height:1px;background:#e0e0e0;"></div>
<svg class="a" style="left:535px;top:984.5px;" width="26" height="24" viewBox="0 0 26 24">
<path d="M3.5 17 V4.8 H13.5" fill="none" stroke="#272833" stroke-width="3.2"/>
<circle cx="18.9" cy="6" r="3.7" fill="#2ea2e6" stroke="#272833" stroke-width="1.6"/>
<g transform="translate(5.8 22.7) scale(1 1.13)"><text x="0" y="0" font-family="Liberation Sans" font-weight="bold" font-size="14" fill="#1b8a24" stroke="#fdfdfd" stroke-width="1" paint-order="stroke">C#</text></g>
</svg>
<svg class="a" style="left:736px;top:985px;" width="24" height="22" viewBox="0 0 24 22"><path d="M8.6 3.2 C6.2 3.2 6.6 5.5 6.2 7.8 L4.6 10.8 L6.2 13.8 C6.6 16.2 6.2 18.5 8.6 18.5 M15.4 3.2 C17.8 3.2 17.4 5.5 17.8 7.8 L19.4 10.8 L17.8 13.8 C17.4 16.2 17.8 18.5 15.4 18.5" fill="none" stroke="#1e1f24" stroke-width="1.8"/></svg>
<svg class="a" style="left:819px;top:989.5px;" width="10" height="14" viewBox="0 0 10 14"><path d="M2.5 2.5 L7 7 L2.5 11.5" fill="none" stroke="#8c8c90" stroke-width="1.3"/></svg>
<svg class="a" style="left:842px;top:983px;" width="26" height="26" viewBox="0 0 26 26">
<rect x="1.8" y="4.5" width="7.5" height="7.5" transform="rotate(45 5.5 8.2)" fill="#d4781c"/>
<path d="M9 8 H14 V18 H18" fill="none" stroke="#d4781c" stroke-width="2"/>
<rect x="15" y="10" width="6" height="6" transform="rotate(45 18 13)" fill="#d4781c"/>
<rect x="16" y="17" width="6" height="6" transform="rotate(45 19 20)" fill="#d4781c"/>
</svg>
<div class="t" style="left:22.43px;top:131.30px;font-size:15.6px;line-height:20px;color:#1e1f24;transform:translate(-50%,-50%) rotate(-90deg)">Explorer</div>
<div class="t" style="left:22.12px;top:247.20px;font-size:16.5px;line-height:21px;color:#1e1f24;transform:translate(-50%,-50%) rotate(-90deg)">Commit</div>
<div class="t" style="left:22.30px;top:389.00px;font-size:16px;line-height:21px;color:#1e1f24;transform:translate(-50%,-50%) rotate(-90deg)">Azure Explorer</div>
<div class="t" style="left:22.43px;top:551.85px;font-size:15.6px;line-height:20px;color:#1e1f24;transform:translate(-50%,-50%) rotate(-90deg)">Pull Requests</div>
<div class="t" style="left:22.23px;top:798.00px;font-size:16.2px;line-height:21px;color:#1e1f24;transform:translate(-50%,-50%) rotate(-90deg)">Structure</div>
<div class="t" style="left:22.33px;top:928.75px;font-size:15.9px;line-height:21px;color:#1e1f24;transform:translate(-50%,-50%) rotate(-90deg)">Bookmarks</div>
<svg class="a" style="left:9px;top:168px;" width="22" height="20" viewBox="0 0 22 20"><path d="M2 4 H8.5 L10.5 6 H18.5 V17 H2 Z" fill="#7c7e88"/></svg>
<svg class="a" style="left:7px;top:284px;" width="26" height="16" viewBox="0 0 26 16"><circle cx="12.5" cy="8.3" r="4.2" fill="none" stroke="#6c707e" stroke-width="2.5"/><path d="M2 8.3 H8 M17 8.3 H23" stroke="#6c707e" stroke-width="2.5"/></svg>
<svg class="a" style="left:4px;top:444px;" width="30" height="30" viewBox="0 0 30 30"><polygon points="5.3,21.8 15.6,6.8 16.4,8 10.3,21.8" fill="#7c7e88"/><polygon points="17.6,8.8 25.2,22.6 12.5,22.7 19.8,19.6 16,14.5" fill="#7c7e88"/></svg>
<svg class="a" style="left:4px;top:602px;" width="30" height="30" viewBox="0 0 30 30"><rect x="8.4" y="7" width="3.2" height="16.8" fill="#6c6e7a"/><polygon points="11.8,13.2 17.3,8.6 17.3,17.6" fill="#6c6e7a"/><path d="M16 12.9 H22.6 V22.4" fill="none" stroke="#6c6e7a" stroke-width="2.6"/></svg>
<svg class="a" style="left:10px;top:838px;" width="20" height="18" viewBox="0 0 20 18"><rect x="9.5" y="1.5" width="6.5" height="6" fill="#7c7e88"/><rect x="2.5" y="9" width="6.5" height="6.5" fill="#7c7e88"/><rect x="10" y="9" width="6.5" height="6.5" fill="#7c7e88"/></svg>
<svg class="a" style="left:10px;top:975px;" width="20" height="22" viewBox="0 0 20 22"><path d="M2.5 2 H16.5 V19 L9.5 13.5 L2.5 19 Z" fill="#7c7e88"/></svg>
<div class="a" style="left:0px;top:90px;width:2px;height:923px;background:#b9b9bc;"></div>
<div class="a" style="left:1387px;top:90px;width:3px;height:923px;background:#d6d6d8;"></div>
<div class="t" style="left:1369.57px;top:208.25px;font-size:16.2px;line-height:21px;color:#1e1f24;transform:translate(-50%,-50%) rotate(90deg)">Unit Tests Coverage</div>
<div class="t" style="left:1369.54px;top:378.90px;font-size:16.1px;line-height:21px;color:#1e1f24;transform:translate(-50%,-50%) rotate(90deg)">IL Viewer</div>
<div class="t" style="left:1369.33px;top:504.00px;font-size:15.5px;line-height:20px;color:#1e1f24;transform:translate(-50%,-50%) rotate(90deg)">Database</div>
<svg class="a" style="left:1358px;top:104px;" width="30" height="30" viewBox="0 0 30 30">
<path d="M5.8 7.5 C9 6 17 6 20.3 7.2" fill="none" stroke="#6c707e" stroke-width="1.8"/>
<path d="M5.8 7 H12.8 V21.8 C8 19 5.8 14 5.8 9 Z" fill="#6c707e"/>
<path d="M20.2 7.2 V12.6" stroke="#6c707e" stroke-width="1.8"/>
<circle cx="20.6" cy="20.2" r="4.6" fill="none" stroke="#6c707e" stroke-width="1.7"/>
<path d="M20 15.6 A4.6 4.6 0 0 0 20 24.8 Z" fill="#6c707e"/>
</svg>
<svg class="a" style="left:1362px;top:318px;" width="24" height="22" viewBox="0 0 24 22">
<rect x="7" y="2" width="6.5" height="6.5" transform="rotate(45 10.25 5.25)" fill="#7c7e88"/>
<rect x="2" y="7.5" width="6.5" height="6.5" transform="rotate(45 5.25 10.75)" fill="#a6a8b0"/>
<rect x="12" y="7.5" width="6.5" height="6.5" transform="rotate(45 15.25 10.75)" fill="#7c7e88"/>
<rect x="7" y="13" width="6.5" height="6.5" transform="rotate(45 10.25 16.25)" fill="#c2c4ca"/>
</svg>
<svg class="a" style="left:1362px;top:442px;" width="24" height="24" viewBox="0 0 24 24">
<ellipse cx="11.5" cy="4.8" rx="8.5" ry="3" fill="#6c707e"/>
<path d="M3 8.5 C3 12 20 12 20 8.5 M3 12.5 C3 16 20 16 20 12.5 M3 16.5 C3 20 20 20 20 16.5" fill="none" stroke="#6c707e" stroke-width="2.4"/>
</svg>
<svg class="a" style="left:48px;top:1021px;" width="20" height="22" viewBox="0 0 20 22">
<circle cx="4.5" cy="17.5" r="2.4" fill="#6c707e"/><circle cx="4.5" cy="3.5" r="2.4" fill="#6c707e"/><circle cx="13.5" cy="5" r="2.4" fill="#6c707e"/>
<path d="M4.5 4 V17.5 M13.5 5.5 C13.5 10.5 8 10.5 4.5 13" fill="none" stroke="#6c707e" stroke-width="2.3"/>
</svg>
<svg class="a" style="left:124px;top:1022px;" width="22" height="18" viewBox="0 0 22 18">
<rect x="2" y="2" width="3" height="3" fill="#6c707e"/><rect x="2" y="7.5" width="3" height="3" fill="#6c707e"/><rect x="2" y="13" width="3" height="3" fill="#6c707e"/>
<rect x="7" y="2.2" width="11.5" height="2.6" fill="#6c707e"/><rect x="7" y="7.7" width="11.5" height="2.6" fill="#6c707e"/><rect x="7" y="13.2" width="11.5" height="2.6" fill="#6c707e"/>
</svg>
<svg class="a" style="left:225px;top:1021px;" width="22" height="22" viewBox="0 0 22 22"><circle cx="10.5" cy="10.5" r="8.5" fill="#6c707e"/><rect x="9.2" y="4.5" width="2.6" height="7.5" fill="#ebebeb"/><rect x="9.2" y="13.5" width="2.6" height="2.6" fill="#ebebeb"/></svg>
<svg class="a" style="left:355px;top:1019px;" width="26" height="24" viewBox="0 0 26 24">
<path d="M2.5 11 H7 M3 14.5 H7 M2.5 18 H7" stroke="#7c7e88" stroke-width="1.6"/>
<circle cx="16.5" cy="15.3" r="6.4" fill="none" stroke="#7c7e88" stroke-width="2"/>
<path d="M13.8 5.6 H19.2 M16.5 5.6 V9 M16.2 15.6 L19 12.3" stroke="#7c7e88" stroke-width="1.9"/>
</svg>
<svg class="a" style="left:614px;top:1021.5px;" width="24" height="22" viewBox="0 0 24 22">
<circle cx="14" cy="8.5" r="6" fill="none" stroke="#7c7e88" stroke-width="2"/>
<circle cx="9" cy="12.5" r="6.8" fill="#ebebeb"/>
<circle cx="9" cy="12.5" r="6.3" fill="none" stroke="#7c7e88" stroke-width="2"/>
<path d="M9 6.2 A6.3 6.3 0 0 0 9 18.8 Z" fill="#7c7e88"/>
</svg>
<svg class="a" style="left:749px;top:1019px;" width="22" height="24" viewBox="0 0 22 24">
<circle cx="10.5" cy="15.3" r="6.4" fill="none" stroke="#7c7e88" stroke-width="2"/>
<path d="M7.8 5.6 H13.2 M10.5 5.6 V9 M10.2 15.6 L13 12.3" stroke="#7c7e88" stroke-width="1.9"/>
</svg>
<svg class="a" style="left:928px;top:1021px;" width="22" height="20" viewBox="0 0 22 20"><rect x="1.5" y="1.5" width="17" height="15.5" fill="#6c707e"/><path d="M4.5 5 L8 8 L4.5 11" fill="none" stroke="#ebebeb" stroke-width="1.6"/><path d="M9 12.8 H14.5" stroke="#ebebeb" stroke-width="1.6"/></svg>
<svg class="a" style="left:1045px;top:1017px;" width="30" height="30" viewBox="0 0 30 30">
<circle cx="6.8" cy="8.3" r="1.9" fill="#6c6e7a"/>
<rect x="8.7" y="10.2" width="13.6" height="13.6" rx="2.6" fill="#6c6e7a"/>
<circle cx="12" cy="13.5" r="1.8" fill="#ebebeb"/>
<circle cx="17.2" cy="18.8" r="3.2" fill="#ebebeb"/>
</svg>
<svg class="a" style="left:1145px;top:1017px;" width="35" height="30" viewBox="0 0 35 30">
<path d="M20.9 8.7 L13 20 M20.9 8.7 L24 19 M10.5 13.5 L12 19 M28 14 L26 19" stroke="#6c6e7a" stroke-width="1.9" fill="none"/>
<circle cx="20.9" cy="8.7" r="3.6" fill="#6c6e7a"/>
<circle cx="12.3" cy="21.4" r="3.6" fill="#6c6e7a"/>
<circle cx="25" cy="21.4" r="3.6" fill="#6c6e7a"/>
</svg>
<svg class="a" style="left:1282px;top:1020px;" width="25" height="22" viewBox="0 0 25 22">
<path d="M6 1.5 H16.5 L22 11 L16.5 20.5 H6 L1 11 Z" fill="#6c707e"/>
<polygon points="8.5,6 16.5,11 8.5,16" fill="#ebebeb"/>
</svg>
<svg class="a" style="left:9px;top:1052px;" width="24" height="24" viewBox="0 0 24 24"><path d="M2.8 6 V20.5 H17" fill="none" stroke="#6c6e7a" stroke-width="1.4"/><rect x="5.8" y="3.8" width="14" height="14" fill="none" stroke="#6c6e7a" stroke-width="1.4"/></svg>
<svg class="a" style="left:1195px;top:1050px;" width="30" height="28" viewBox="0 0 30 28">
<path d="M9.2 13 V8.6 C9.2 4.2 16.4 4.2 16.4 8.6 V9.5" fill="none" stroke="#6c6e7a" stroke-width="2.3"/>
<rect x="13" y="12.6" width="12.4" height="9" fill="#6c6e7a"/>
</svg>
<svg class="a" style="left:1236px;top:1050px;" width="32" height="28" viewBox="0 0 32 28">
<path d="M6.5 17.3 C2.5 17.3 2 11 6.3 10.3 C7 5 12 3 15.5 5.5 C18 3.5 23.5 4.5 24.5 10.5 C26 11 26.5 13 26 14 L20 17.3 Z" fill="#6c6e7a"/>
<text x="11.8" y="15.6" font-family="Liberation Sans" font-weight="bold" font-size="13" fill="#ebebeb">?</text>
<circle cx="22.1" cy="20.5" r="6.2" fill="#ebebeb"/>
<polygon points="27.09,20.25 27.05,21.23 25.68,21.78 25.36,22.45 25.80,23.86 25.08,24.52 23.72,23.94 23.02,24.19 22.35,25.49 21.37,25.45 20.82,24.08 20.15,23.76 18.74,24.20 18.08,23.48 18.66,22.12 18.41,21.42 17.11,20.75 17.15,19.77 18.52,19.22 18.84,18.55 18.40,17.14 19.12,16.48 20.48,17.06 21.18,16.81 21.85,15.51 22.83,15.55 23.38,16.92 24.05,17.24 25.46,16.80 26.12,17.52 25.54,18.88 25.79,19.58" fill="#6c6e7a"/><circle cx="22.1" cy="20.5" r="1.7" fill="#ebebeb"/>
</svg>
<svg class="a" style="left:1275px;top:1051px;" width="26" height="26" viewBox="0 0 26 26"><circle cx="12.8" cy="12.8" r="10" fill="none" stroke="#56a545" stroke-width="1.6"/><path d="M7.5 12.5 L11.5 17 L17.5 7.5" fill="none" stroke="#56a545" stroke-width="1.9"/></svg>
<svg class="a" style="left:1310px;top:1050px;" width="30" height="28" viewBox="0 0 30 28"><path d="M10.5 3.8 L18.3 16.2 M8.7 19.3 L13.4 10.8 M21.6 8 L15.5 24.3" fill="none" stroke="#6c6e7a" stroke-width="2.3" stroke-linecap="butt"/></svg>
<svg class="a" style="left:1349px;top:1053px;" width="28" height="24" viewBox="0 0 28 24">
<polygon points="1.5,2.5 24.5,2.5 13,21.5" fill="#1e9e4a"/>
<path d="M7 7.5 L12.5 15 L19 5" fill="none" stroke="#fff" stroke-width="2.3"/>
</svg>
<div class="a" style="left:12px;top:0;width:1366px;height:1.5px;background:#a3a3a3;z-index:5"></div>
<div class="a" style="left:0;top:10px;width:1.5px;height:1060px;background:#a9a9ab;z-index:5"></div>
<div class="a" style="left:1388px;top:10px;width:1px;height:1060px;background:#cfcfd1;z-index:5"></div>
<div class="a" style="left:1389px;top:0;width:1px;height:1080px;background:#ffffff;z-index:5"></div>
<div class="a" style="left:10px;top:1078.5px;width:1370px;height:1.5px;background:#a0a0a2;z-index:5"></div>
<svg class="a" style="left:0px;top:0px;z-index:6" width="12" height="12" viewBox="0 0 12 12"><path d="M0 0 H12 V1.5 A10.5 10.5 0 0 0 1.5 12 H0 Z" fill="#fff"/><path d="M12 1.8 A10.2 10.2 0 0 0 1.8 12" fill="none" stroke="#a9a9ab" stroke-width="1.3"/></svg>
<svg class="a" style="left:1378px;top:0px;z-index:6" width="12" height="12" viewBox="0 0 12 12"><path d="M12 0 H0 V1.5 A10.5 10.5 0 0 1 10.5 12 H12 Z" fill="#fff"/><path d="M0 1.8 A10.2 10.2 0 0 1 10.2 12" fill="none" stroke="#c4c4c6" stroke-width="1.2"/></svg>
<svg class="a" style="left:0px;top:1068px;z-index:6" width="12" height="12" viewBox="0 0 12 12"><path d="M0 12 H12 V10.5 A10.5 10.5 0 0 1 1.5 0 H0 Z" fill="#fff"/><path d="M12 10.2 A10.2 10.2 0 0 1 1.8 0" fill="none" stroke="#a9a9ab" stroke-width="1.3"/></svg>
<svg class="a" style="left:1378px;top:1068px;z-index:6" width="12" height="12" viewBox="0 0 12 12"><path d="M12 12 H0 V10.5 A10.5 10.5 0 0 0 10.5 0 H12 Z" fill="#fff"/><path d="M0 10.2 A10.2 10.2 0 0 0 10.2 0" fill="none" stroke="#b4b4b6" stroke-width="1.2"/></svg>
<svg class="a" style="left:685px;top:10px;z-index:7" width="40" height="45" viewBox="0 0 40 45"><path d="M15.3 16 V37.7 L20.3 33.3 L23.7 40.6 L27.3 39.3 L24 32.3 L31.7 31.8 Z" fill="#fdfdfd" stroke="#3a3a3a" stroke-width="1.1" stroke-linejoin="round"/></svg>
<div class="a" style="left:1388.5px;top:824px;width:1.5px;height:16px;background:#8c8c90;z-index:6"></div>
</body></html>
